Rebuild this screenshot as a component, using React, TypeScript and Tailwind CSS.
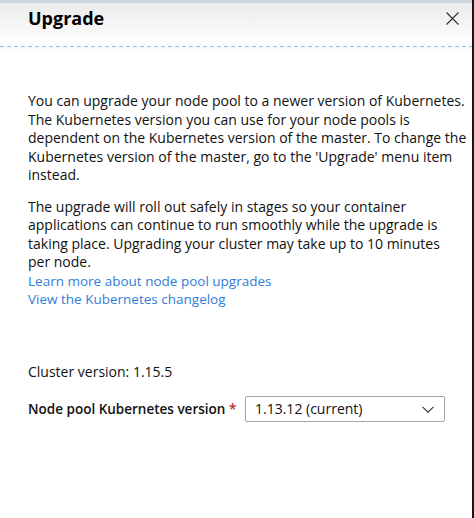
export default function App() {
  return (
    <div className="w-[474px] h-[518px] bg-white border-r-2 border-[#161616] flex flex-col font-['Open_Sans',sans-serif] text-[#111]">
      <div className="h-[3px] bg-[#cdd4da]" />
      <div className="h-[43px] bg-gradient-to-b from-[#ebebeb] to-white flex items-start justify-between pl-[28px] pr-[12px]">
        <h1 className="text-[18px] font-bold leading-[30px] text-black">Upgrade</h1>
        <svg className="mt-[8px]" width="15" height="15" viewBox="0 0 15 15" fill="none" stroke="#333" strokeWidth="1.2">
          <path d="M1.5 1.5l12 12M13.5 1.5l-12 12" />
        </svg>
      </div>
      <div className="h-px bg-[repeating-linear-gradient(to_right,#8ec6e2_0_4px,transparent_4px_7px)]" />
      <div className="h-[3px] bg-gradient-to-b from-[#f1f7fb] to-white" />

      <div className="pl-[28px] pr-[2px] pt-[42px] text-[14px] leading-[18.5px]">
        <p className="whitespace-nowrap">
          You can upgrade your node pool to a newer version of Kubernetes.
          <br />
          The Kubernetes version you can use for your node pools is
          <br />
          dependent on the Kubernetes version of the master. To change the
          <br />
          Kubernetes version of the master, go to the 'Upgrade' menu item
          <br />
          instead.
        </p>
        <p className="mt-[13px] whitespace-nowrap">
          The upgrade will roll out safely in stages so your container
          <br />
          applications can continue to run smoothly while the upgrade is
          <br />
          taking place. Upgrading your cluster may take up to 10 minutes
          <br />
          per node.
        </p>
        <div className="flex flex-col items-start text-[13.5px] text-[#2f7ed8]">
          <a href="#">Learn more about node pool upgrades</a>
          <a href="#">View the Kubernetes changelog</a>
        </div>

        <div className="mt-[54px]">Cluster version: 1.15.5</div>

        <div className="mt-[15px] flex items-center gap-[10px]">
          <span className="w-[207px] text-[13.5px] font-semibold whitespace-nowrap">
            Node pool Kubernetes version <span className="text-[#c4262e]">*</span>
          </span>
          <div className="w-[200px] h-[26px] border border-[#a6a6a6] rounded-[2px] flex items-center justify-between pl-[9px] pr-[10px]">
            <span>1.13.12 (current)</span>
            <svg width="12" height="7" viewBox="0 0 12 7" fill="none" stroke="#333" strokeWidth="1.1">
              <path d="M0.5 0.8l5.5 5.4 5.5-5.4" />
            </svg>
          </div>
        </div>
      </div>
    </div>
  );
}
